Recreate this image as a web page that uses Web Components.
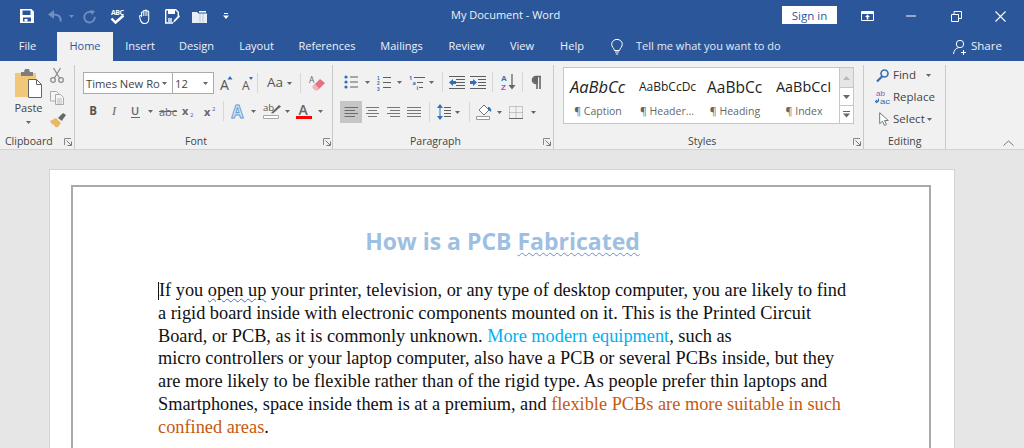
<!DOCTYPE html>
<html><head><meta charset="utf-8"><title>My Document - Word</title>
<style>
html,body{margin:0;padding:0;width:1024px;height:448px;overflow:hidden;background:#e6e6e6;font-family:"Open Sans","Noto Sans",sans-serif}
</style></head><body>
<w-app>
  <w-titlebar>
    <w-ico slot="qat" n="save" w="14" h="14" g="20" c="#fff"></w-ico>
    <w-ico slot="qat" n="undo" w="14" h="12" g="14"></w-ico>
    <w-ico slot="qat" n="caret" w="5" h="3" g="7" c="#6f8fbd"></w-ico>
    <w-ico slot="qat" n="redo" w="13" h="13" g="9"></w-ico>
    <w-ico slot="qat" n="spell" w="15" h="16" g="14"></w-ico>
    <w-ico slot="qat" n="hand" w="12" h="16" g="14"></w-ico>
    <w-ico slot="qat" n="saveedit" w="15" h="15" g="14"></w-ico>
    <w-ico slot="qat" n="folder" w="15" h="13" g="12"></w-ico>
    <w-ico slot="qat" n="custom" w="6" h="6" g="16"></w-ico>
    <span slot="title">My Document - Word</span>
    <w-ico slot="win" n="display" w="13" h="10" g="0"></w-ico>
    <w-ico slot="win" n="min" w="10" h="2" g="32"></w-ico>
    <w-ico slot="win" n="restore" w="11" h="11" g="35"></w-ico>
    <w-ico slot="win" n="close" w="11" h="11" g="33"></w-ico>
  </w-titlebar>
  <w-tabs>
    <w-tab w="55">File</w-tab><w-tab w="56" g="2" active>Home</w-tab><w-tab w="54">Insert</w-tab><w-tab w="59">Design</w-tab><w-tab w="61">Layout</w-tab><w-tab w="80">References</w-tab><w-tab w="69">Mailings</w-tab><w-tab w="61">Review</w-tab><w-tab w="50">View</w-tab><w-tab w="50">Help</w-tab>
    <w-ico n="bulb" w="12" h="16" g="14"></w-ico>
    <w-tab w="157" g="13" left dim>Tell me what you want to do</w-tab>
    <w-ico n="person" w="14" h="16" g="160"></w-ico>
    <w-tab w="40" g="4" left big>Share</w-tab>
  </w-tabs>
  <w-ribbon>
    <w-group w="75" label="Clipboard" lx="5" launch="64">
      <w-cols>
        <w-paste></w-paste>
        <w-stack>
          <w-ico n="cut" w="14" h="15"></w-ico>
          <w-ico n="copy" w="14" h="14"></w-ico>
          <w-ico n="painter" w="16" h="15"></w-ico>
        </w-stack>
      </w-cols>
    </w-group>
    <w-group w="258" label="Font" lx="110" launch="248" sep>
      <w-row t="7">
        <w-field w="90" g="8" caret="1" val="Times New Ro"></w-field>
        <w-field w="42" g="-1" caret="1" val="12"></w-field>
        <w-ico n="grow" w="12" h="14" g="6"></w-ico>
        <w-ico n="shrink" w="11" h="13" g="10"></w-ico>
        <w-vr g="4"></w-vr>
        <w-txt g="9" s="13.5" c="#555">Aa</w-txt>
        <w-ico n="caret" w="5" h="3" g="4"></w-ico>
        <w-vr g="8"></w-vr>
        <w-ico n="eraser" w="16" h="16" g="8"></w-ico>
      </w-row>
      <w-row t="6">
        <w-txt g="14" s="11.5" c="#555" b w="8">B</w-txt>
        <w-txt g="13" s="12.5" c="#666" i serif w="8">I</w-txt>
        <w-ico n="under" w="9" h="13" g="13"></w-ico>
        <w-ico n="caret" w="5" h="3" g="8"></w-ico>
        <w-txt g="6" s="11" c="#666" strike w="17">abc</w-txt>
        <w-ico n="sub" w="12" h="11" g="6"></w-ico>
        <w-ico n="sup" w="12" h="11" g="10"></w-ico>
        <w-vr g="7"></w-vr>
        <w-ico n="effect" w="14" h="15" g="8"></w-ico>
        <w-ico n="caret" w="5" h="3" g="5"></w-ico>
        <w-ico n="high" w="18" h="16" g="7"></w-ico>
        <w-ico n="caret" w="5" h="3" g="4"></w-ico>
        <w-ico n="color" w="16" h="15" g="6"></w-ico>
        <w-ico n="caret" w="5" h="3" g="6"></w-ico>
      </w-row>
    </w-group>
    <w-group w="221" label="Paragraph" lx="77" launch="210" sep>
      <w-row t="6">
        <w-ico n="bullets" w="14" h="14" g="11"></w-ico>
        <w-ico n="caret" w="5" h="3" g="7"></w-ico>
        <w-ico n="numbers" w="14" h="15" g="7"></w-ico>
        <w-ico n="caret" w="5" h="3" g="6"></w-ico>
        <w-ico n="multi" w="16" h="15" g="7"></w-ico>
        <w-ico n="caret" w="5" h="3" g="4"></w-ico>
        <w-vr g="8"></w-vr>
        <w-ico n="outdent" w="16" h="13" g="6"></w-ico>
        <w-ico n="indent" w="16" h="13" g="5"></w-ico>
        <w-vr g="6"></w-vr>
        <w-ico n="sort" w="15" h="16" g="8"></w-ico>
        <w-vr g="6"></w-vr>
        <w-ico n="pilcrow" w="10" h="13" g="9"></w-ico>
      </w-row>
      <w-row t="8">
        <w-ico n="left" w="22" h="22" g="7" on></w-ico>
        <w-ico n="center" w="13" h="11" g="4"></w-ico>
        <w-ico n="right" w="13" h="11" g="8"></w-ico>
        <w-ico n="just" w="14" h="11" g="7"></w-ico>
        <w-vr g="8"></w-vr>
        <w-ico n="spacing" w="14" h="16" g="7"></w-ico>
        <w-ico n="caret" w="5" h="3" g="4"></w-ico>
        <w-vr g="9"></w-vr>
        <w-ico n="shade" w="16" h="16" g="6"></w-ico>
        <w-ico n="caret" w="5" h="3" g="5"></w-ico>
        <w-ico n="borders" w="14" h="13" g="7"></w-ico>
        <w-ico n="caret" w="5" h="3" g="8"></w-ico>
      </w-row>
    </w-group>
    <w-group w="310" label="Styles" lx="134" launch="299" sep>
      <w-gallery>
        <w-style prev="AaBbCc" name="¶ Caption" w="56" g="6" s="16.5" it></w-style>
        <w-style prev="AaBbCcDc" name="¶ Header..." w="56" g="13" s="12"></w-style>
        <w-style prev="AaBbCc" name="¶ Heading" w="56" g="12" s="15.5"></w-style>
        <w-style prev="AaBbCcI" name="¶ Index" w="56" g="13" s="14.4"></w-style>
      </w-gallery>
    </w-group>
    <w-group w="82" label="Editing" lx="24" sep>
      <w-editrow first><w-ico n="find" w="13" h="13" g="12"></w-ico><w-txt g="4" s="11.5" c="#444">Find</w-txt><w-ico n="caret" w="5" h="3" g="10"></w-ico></w-editrow>
      <w-editrow><w-ico n="replace" w="16" h="14" g="11"></w-ico><w-txt g="2" s="11.5" c="#444">Replace</w-txt></w-editrow>
      <w-editrow><w-ico n="select" w="10" h="14" g="15"></w-ico><w-txt g="4" s="11.5" c="#444">Select</w-txt><w-ico n="caret" w="5" h="3" g="2"></w-ico></w-editrow>
    </w-group>
    <w-ico n="chev" w="11" h="6" g="57" style="align-self:flex-end;margin-bottom:3px"></w-ico>
  </w-ribbon>
  <w-canvas>
    <w-page>
      <w-heading>How is a PCB <u>Fabricated</u></w-heading>
      <w-body>
        <w-cursor></w-cursor>If you <w-sq>open up</w-sq> your printer, television, or any type of desktop computer, you are likely to find<br>
        a rigid board inside with electronic components mounted on it. This is the Printed Circuit<br>
        Board, or PCB, as it is commonly unknown. <span style="color:#00b0f0">More modern equipment</span>, such as<br>
        micro controllers or your laptop computer, also have a PCB or several PCBs inside, but they<br>
        are more likely to be flexible rather than of the rigid type. As people prefer thin laptops and<br>
        Smartphones, space inside them is at a premium, and <span style="color:#c55a11">flexible PCBs are more suitable in such</span><br>
        <span style="color:#c55a11">confined areas</span>.
      </w-body>
    </w-page>
  </w-canvas>
</w-app>
<script>
const ui='"Open Sans","Noto Sans",sans-serif';
const L='#5e5e5e',B='#2f6fb5',LB='#5b9bd5',T='#666';
const bars=(ys,x1,x2,c=L,w=1)=>ys.map((y,i)=>{const a=Array.isArray(x1)?x1[i]:x1,b=Array.isArray(x2)?x2[i]:x2;return `<path d="M${a} ${y}H${b}" stroke="${c}" stroke-width="${w}"/>`}).join('');
const ICONS={
 caret:c=>`<path d="M0 0h5L2.5 3z" fill="${c||'#666'}"/>`,
 save:()=>`<path fill="#fff" fill-rule="evenodd" d="M0 0h11.5L14 2.5V14H0zM2.5 1.5V6h8V1.500zM3 8.500V12.500h8V8.500z"/><rect x="4.500" y="10" width="3" height="2.500" fill="#fff"/>`,
 undo:()=>`<path d="M12.500 11.500C13.500 6.500 10 4 4 4.500" fill="none" stroke="#6f8fbd" stroke-width="2"/><path d="M6 0 0 4.500 6 9z" fill="#6f8fbd"/>`,
 redo:()=>`<path d="M8.500 2.300A5.300 5.300 0 1 0 11.800 6.800" fill="none" stroke="#6f8fbd" stroke-width="1.800"/><path d="M7 0l5 1-3 4z" fill="#6f8fbd"/>`,
 spell:()=>`<text x="1" y="6.500" font-family="Open Sans" font-weight="700" font-size="7" fill="#fff" textLength="13">ABC</text><path d="M1.500 10.500l4 4 8-7" fill="none" stroke="#fff" stroke-width="2.400"/>`,
 hand:()=>`<path d="M2.500 8V4.500a1 1 0 0 1 1.800 0V3a1 1 0 0 1 1.800 0v-.300a1 1 0 0 1 1.800 0V3.500a1 1 0 0 1 1.800 0V11c0 3-1.500 4.500-4 4.500-2.500 0-3.500-1-4.300-3.500L.6 8.500C.5 7.500 1.500 7 2.500 8z" fill="none" stroke="#fff" stroke-width="1.100"/><path d="M4.300 4.500V8M6.100 3v5M7.900 3v5" stroke="#fff" stroke-width=".9"/>`,
 saveedit:()=>`<path d="M.7.700h10l2.600 2.500V8M8 14H.7V.7" fill="none" stroke="#fff" stroke-width="1.400"/><rect x="3" y="1" width="7" height="4" fill="#fff"/><rect x="3" y="9" width="4" height="4" fill="#fff" opacity=".7"/><path d="M8 14l1-3 5-5 1 1.500-5 5z" fill="#fff"/>`,
 folder:()=>`<path d="M0 2h5l1.500 1.500H15V13H0z" fill="#e9eef6"/><path d="M7 1h7v1.500H7z" fill="#fff"/><path d="M8 3.500v9M11 3.500v9" stroke="#2b579a" stroke-width=".5" opacity=".5"/>`,
 custom:()=>`<path d="M1 .5h4" stroke="#fff" stroke-width="1"/><path d="M0 2.500h6L3 6z" fill="#fff"/>`,
 display:()=>`<path d="M.5.500h12v9H.5z" fill="none" stroke="#fff"/><path d="M1 1h11v2H1z" fill="#fff"/><path d="M6.500 3.500l-2.500 2.500h1.700v2.500h1.600V6H9z" fill="#fff"/>`,
 min:()=>`<path d="M0 1h10" stroke="#fff" stroke-width="1"/>`,
 restore:()=>`<path d="M.5 3.500h7v7h-7zM3 3.500V.5h7.500v7H7.500" fill="none" stroke="#fff"/>`,
 close:()=>`<path d="M.5.500l10 10M10.500.500l-10 10" stroke="#fff" stroke-width="1.100"/>`,
 bulb:()=>`<path d="M3.500 11.500C3 9 .7 8 .7 5.200a5.300 4.800 0 0 1 10.600 0c0 2.800-2.300 3.800-2.800 6.300z" fill="none" stroke="#fff"/><path d="M4 13h4M4.800 15h2.400" stroke="#fff"/>`,
 person:()=>`<circle cx="7" cy="5" r="3.700" fill="none" stroke="#fff"/><path d="M.5 15c.3-3.500 2.500-6 5-6.300" fill="none" stroke="#fff"/><path d="M10.500 11v5M8 13.500h5" stroke="#fff"/>`,
 cut:()=>`<path d="M3.500 0l6 10M10.500 0l-6 10" stroke="#8c8c8c" stroke-width="1.300"/><circle cx="3" cy="12" r="2.300" fill="none" stroke="#8c8c8c" stroke-width="1.300"/><circle cx="11" cy="12" r="2.300" fill="none" stroke="#8c8c8c" stroke-width="1.300"/>`,
 copy:()=>`<path d="M.5.500h6l2 2V10H.5z" fill="#f4f4f4" stroke="#aaa"/><path d="M5.500 3.500h5l3 3v7h-8z" fill="#f4f4f4" stroke="#aaa"/><path d="M7 8h5M7 10h5M7 12h5" stroke="#bbb"/>`,
 painter:()=>`<path d="M0 8l6-3 5 5-3 4c-1 .5-2 .5-3-.5L3 11l-1 .5z" fill="#eab860"/><path d="M9 4l4-4 3 2-3 4 -1 2-4-3z" fill="#666"/>`,
 grow:()=>`<text x="0" y="14" font-family="Open Sans" font-size="14" fill="#555">A</text><path d="M7.500 3.500L10 0l2.500 3.500z" fill="${B}"/>`,
 shrink:()=>`<text x="0" y="13" font-family="Open Sans" font-size="12" fill="#555">A</text><path d="M7 0h4L9 3z" fill="${B}"/>`,
 eraser:()=>`<text x="0" y="7.500" font-family="Open Sans" font-size="8.500" fill="#666">A</text><path d="M4 11l7-7 5 4-7 7z" fill="#e5707f"/><path d="M3 12l3-3 4 4-2 2.500H6z" fill="#f2b3bb"/>`,
 under:()=>`<text x="0" y="9.500" font-family="Open Sans" font-size="11" font-weight="600" fill="#666">U</text><path d="M0 12.500h9" stroke="#666"/>`,
 sub:()=>`<text x="0" y="9" font-family="Open Sans" font-weight="700" font-size="11" fill="#666">x</text><text x="8" y="11" font-family="Open Sans" font-size="6" fill="${B}">2</text>`,
 sup:()=>`<text x="0" y="10" font-family="Open Sans" font-weight="700" font-size="11" fill="#666">x</text><text x="8" y="5" font-family="Open Sans" font-size="6" fill="${B}">2</text>`,
 effect:()=>`<text x="-.5" y="14" font-family="Open Sans" font-weight="700" font-size="17" fill="#dbe8f6" stroke="${LB}" stroke-width=".9">A</text>`,
 high:()=>`<text x="0" y="8" font-family="Open Sans" font-size="9.500" fill="#555">ab</text><path d="M8 10l8-8 2 1.500-8 7z" fill="#666"/><path d="M.5 12.500h15v3H.5z" fill="#fff" stroke="#a6a6a6"/>`,
 color:()=>`<text x="2.500" y="11" font-family="Open Sans" font-weight="600" font-size="14" fill="#666">A</text><rect x="0" y="12" width="16" height="3" fill="#f00"/>`,
 bullets:()=>`<circle cx="2" cy="2" r="1.600" fill="${B}"/><circle cx="2" cy="7" r="1.600" fill="${B}"/><circle cx="2" cy="12" r="1.600" fill="${B}"/>`+bars([2,7,12],6,14),
 numbers:()=>`<text x="0" y="4.500" font-family="Liberation Sans" font-weight="700" font-size="4.700" fill="${B}">1</text><text x="0" y="10" font-family="Liberation Sans" font-weight="700" font-size="4.700" fill="${B}">2</text><text x="0" y="15.500" font-family="Liberation Sans" font-weight="700" font-size="4.700" fill="${B}">3</text>`+bars([2.500,7.500,12.500],6,14),
 multi:()=>`<text x="0" y="5" font-family="Open Sans" font-weight="700" font-size="5.500" fill="${B}">1</text><text x="3.500" y="10" font-family="Open Sans" font-weight="700" font-size="5.500" fill="${B}">a</text><text x="7.500" y="15" font-family="Open Sans" font-weight="700" font-size="5.500" fill="${B}">i</text>`+bars([2.500,7.500,12.500],[5,8,10],[16,14,14]),
 outdent:()=>bars([.5,12.500],0,16)+bars([3.500,6.500,9.500],7,16)+`<path d="M0 6.500l4-3.500v2h3v3H4v2z" fill="${B}"/>`,
 indent:()=>bars([.5,12.500],0,16)+bars([3.500,6.500,9.500],8,16)+`<path d="M7 6.500l-4-3.500v2H0v3h3v2z" fill="${B}"/>`,
 sort:()=>`<text x="0" y="7" font-family="Liberation Sans" font-weight="700" font-size="8" fill="${B}">A</text><text x="0" y="16" font-family="Liberation Sans" font-weight="700" font-size="8" fill="#8e5bb5">Z</text><path d="M11 0v13" stroke="#666" stroke-width="1.300"/><path d="M7.500 11h7L11 15.500z" fill="#666"/>`,
 pilcrow:()=>`<path d="M9 .5H4a3.500 3.500 0 0 0 0 7h1V13M8 .5V13" fill="none" stroke="#666" stroke-width="1.600"/><path d="M4 1h2v6H4a3 3 0 0 1 0-6z" fill="#666"/>`,
 left:()=>`<rect width="22" height="22" fill="#c6c6c6"/>`+bars([6.500,9.500,12.500,15.500],4.500,[18,15,18,15],'#6b6b6b'),
 center:()=>bars([.5,3.500,6.500,9.500],[0,2,0,2],[13,11,13,11],'#777'),
 right:()=>bars([.5,3.500,6.500,9.500],[0,3,0,3],13,'#777'),
 just:()=>bars([.5,3.500,6.500,9.500],0,14,'#777'),
 spacing:()=>`<path d="M3 2v12" stroke="${B}"/><path d="M0 4l3-4 3 4zM0 12l3 4 3-4z" fill="${B}"/>`+bars([3.500,6.500,9.500,12.500],7,14),
 shade:()=>`<path d="M3 6l5-5 5 5-5 5z" fill="#fff" stroke="#777"/><path d="M12 3c2 0 4 2 3 5-1-1-2-2-3-2z" fill="${B}"/><path d="M.5 12.500h13v3H.5z" fill="#fff" stroke="#999"/>`,
 borders:()=>`<path d="M.5.500h13v12H.5zM.5 6.500h13M7 .5v12" fill="none" stroke="#999" stroke-dasharray="1 1"/><path d="M0 12.500h14" stroke="#666"/>`,
 find:()=>`<circle cx="8.500" cy="4.500" r="3.500" fill="none" stroke="${B}" stroke-width="1.600"/><path d="M6 7.500L1 12.500" stroke="${B}" stroke-width="2.200"/>`,
 replace:()=>`<text x="1" y="6" font-family="Liberation Sans" font-size="7" fill="#8e5bb5" textLength="9" lengthAdjust="spacingAndGlyphs">ab</text><text x="5" y="14" font-family="Liberation Sans" font-size="7" fill="${B}" textLength="10" lengthAdjust="spacingAndGlyphs">ac</text><path d="M3.500 8.500v3H1.500M0 11.500l2-1.500v3z" fill="none" stroke="${B}"/>`,
 select:()=>`<path d="M.7.700v11l2.800-2.500 2 4.300 2-1-2-4h3.800z" fill="#fff" stroke="#777"/>`,
 chev:()=>`<path d="M.5 5.500l5-4.500 5 4.500" fill="none" stroke="#777"/>`,
 launch:()=>`<path d="M.5 7V.5H7" fill="none" stroke="#888"/><path d="M2.500 2.500L7 7M3.500 7.500H7.500V3.500" fill="none" stroke="#777"/>`,
 up:()=>`<path d="M0 4h7L3.500 0z" fill="#b8b8b8"/>`,
 down:()=>`<path d="M0 0h7L3.500 4z" fill="#666"/>`,
 more:()=>`<path d="M0 .5h7" stroke="#666"/><path d="M0 2.500h7L3.500 6.500z" fill="#666"/>`
};
function def(name,css,html){
  customElements.define(name,class extends HTMLElement{
    constructor(){super();this.attachShadow({mode:'open'})}
    connectedCallback(){
      const a=n=>this.getAttribute(n);
      this.shadowRoot.innerHTML=`<style>${typeof css==='function'?css(a,this):css}</style>${typeof html==='function'?html(a,this):html}`;
    }
  });
}
const svg=(n,w,h,c)=>`<svg width="${w}" height="${h}" viewBox="0 0 ${w} ${h}" style="display:block;overflow:visible">${ICONS[n](c)}</svg>`;
def('w-ico',a=>`:host{display:block;flex:none;margin-left:${a('g')||0}px;width:${a('w')}px;height:${a('h')}px}`,a=>svg(a('n'),+a('w'),+a('h'),a('c')));
def('w-app',`:host{display:flex;flex-direction:column;width:1024px;height:448px;overflow:hidden}`,`<slot></slot>`);
def('w-titlebar',`:host{display:flex;flex:none;height:32px;background:#2b579a;align-items:center;position:relative;color:#fff;font:11px ${ui}}
 .qat,.win{display:flex;align-items:center}.win{margin-left:auto;padding-right:18px}
 .title{position:absolute;left:451px;top:7px;color:#eef2f8;white-space:nowrap;font-size:11px}
 .sign{position:absolute;left:782px;top:6px;width:55px;height:18px;background:#fff;color:#2b579a;display:flex;align-items:center;justify-content:center;font-size:11.5px}`,
 `<div class="qat"><slot name="qat"></slot></div><div class="title"><slot name="title"></slot></div><div class="sign">Sign in</div><div class="win"><slot name="win"></slot></div>`);
def('w-tabs',`:host{display:flex;flex:none;height:29px;background:#2b579a;align-items:center}`,`<slot></slot>`);
def('w-tab',a=>`:host{display:flex;flex:none;width:${a('w')}px;margin-left:${a('g')||0}px;height:29px;align-items:center;justify-content:${a('left')!==null?'flex-start':'center'};font:${a('big')!==null?'11.5':'11'}px ${ui};white-space:nowrap;padding-bottom:2px;box-sizing:border-box;
 color:${a('active')!==null?'#2b579a':(a('dim')!==null?'#e3e9f3':'#eef2f8')};background:${a('active')!==null?'#f1f1f1':'transparent'}}`,`<slot></slot>`);
def('w-ribbon',`:host{display:flex;flex:none;height:88px;background:#f1f1f1;border-bottom:1px solid #d2d2d2}`,`<slot></slot>`);
def('w-group',a=>`:host{display:block;flex:none;width:${a('w')}px;height:84px;margin-top:4px;position:relative;box-sizing:border-box;border-right:1px solid #c8c8c8;color:#444}
 .label{position:absolute;left:${a('lx')}px;bottom:0;font:10.5px/15px ${ui};color:#444;white-space:nowrap}
 .l{position:absolute;left:${a('launch')}px;bottom:3px}`,
 a=>`<slot></slot><div class="label">${a('label')}</div>${a('launch')?`<div class="l">${svg('launch',8,8)}</div>`:''}`);
def('w-cols',`:host{display:flex}`,`<slot></slot>`);
def('w-stack',`:host{display:flex;flex-direction:column;gap:8px;margin-left:8px;padding-top:3px}`,`<slot></slot>`);
def('w-paste',`:host{display:flex;flex-direction:column;align-items:center;width:27px;margin-left:15px;padding-top:4px;font:11px/14px ${ui};color:#444}
 .t{margin-top:3px}.c{margin-top:6px}`,()=>`<svg width="27" height="29" viewBox="0 0 27 29" style="display:block"><path d="M0 4h21v24H0z" fill="#f1c877"/><path d="M6 3h3l1-3h4l1 3h3v4H6z" fill="#7d7d7d"/><path d="M13.500 10.500h8l5 5v13h-13z" fill="#fff" stroke="#666"/><path d="M21.500 10.500v5h5" fill="none" stroke="#666"/></svg>
 <div class="t">Paste</div><div class="c">${svg('caret',5,3)}</div>`);
def('w-row',a=>`:host{display:flex;align-items:center;height:22px;margin-top:${a('t')||0}px}`,`<slot></slot>`);
def('w-vr',a=>`:host{display:block;flex:none;width:1px;height:20px;background:#d6d6d6;margin-left:${a('g')||0}px}`,``);
def('w-field',a=>`:host{display:flex;flex:none;box-sizing:border-box;width:${a('w')}px;margin-left:${a('g')||0}px;height:22px;background:#fff;border:1px solid #ababab;align-items:center;padding:0 5px 0 2px;font:11.2px ${ui};color:#444;justify-content:space-between;white-space:nowrap}`,
 a=>`<span>${a('val')}</span>${svg('caret',5,3)}`);
def('w-txt',a=>`:host{display:block;flex:none;margin-left:${a('g')||0}px;${a('w')?`width:${a('w')}px;text-align:center;`:''}font:${a('i')!==null?'italic ':''}${a('b')!==null?'700 ':''}${a('s')}px/1 ${a('serif')!==null?'"Liberation Serif",serif':ui};color:${a('c')};white-space:nowrap;${a('strike')!==null?'text-decoration:line-through;':''}}`,`<slot></slot>`);
def('w-gallery',`:host{display:flex;margin:2px 0 0 9px;width:291px;height:57px;box-sizing:border-box;background:#fff;border:1px solid #c6c6c6}
 .items{display:flex;flex:1;min-width:0}
 .s{width:13px;flex:none;display:flex;flex-direction:column;border-left:1px solid #c6c6c6}
 .s div{display:flex;align-items:center;justify-content:center;box-sizing:border-box}
 .u{height:20px;background:#e6e6e6;border-bottom:1px solid #c6c6c6}.m{height:18px;border-bottom:1px solid #c6c6c6}.b{flex:1}`,
 ()=>`<div class="items"><slot></slot></div><div class="s"><div class="u">${svg('up',7,4)}</div><div class="m">${svg('down',7,4)}</div><div class="b">${svg('more',7,7)}</div></div>`);
def('w-style',a=>`:host{display:block;flex:none;width:${a('w')}px;margin-left:${a('g')}px;padding-top:7px;font-family:${ui}}
 .p{height:24px;line-height:24px;white-space:nowrap;font-size:${a('s')}px;color:#222;${a('it')!==null?'font-style:italic;':''}text-align:left}
 .n{font-size:10.5px;color:#666;text-align:center;white-space:nowrap;margin-top:5px}`,
 a=>`<div class="p">${a('prev')}</div><div class="n">${a('name')}</div>`);
def('w-editrow',a=>`:host{display:flex;align-items:center;height:22px;${a('first')!==null?'margin-top:-1px;':''}}`,`<slot></slot>`);
def('w-canvas',`:host{display:block;flex:1;min-height:0;padding:19px 0 0 49px;background:#e6e6e6;overflow:hidden}`,`<slot></slot>`);
def('w-page',`:host{display:block;width:906px;height:400px;box-sizing:border-box;background:#fff;border:1px solid #d4d4d4;padding:15px 24px 0 21px}
 .f{border:2px solid #a9a9a9;height:400px;box-sizing:border-box;width:860px;padding:38px 0 0 85px}`,`<div class="f"><slot></slot></div>`);
def('w-heading',`:host{display:block;font:700 23px/32px ${ui};color:#9dc0e2;margin-left:-85px;width:860px;box-sizing:border-box;text-align:center;padding-right:1px;height:54px}
 ::slotted(u){text-decoration:underline wavy #6d8fc9 1px;text-underline-offset:2px}`,`<slot></slot>`);
def('w-body',`:host{display:block;font:18.32px/22.75px "Liberation Serif",serif;color:#111;white-space:nowrap}`,`<slot></slot>`);
def('w-sq',`:host{display:inline;text-decoration:underline wavy #4c6fc0 1px;text-underline-offset:2px}`,`<slot></slot>`);
def('w-cursor',`:host{display:inline-block;width:1px;height:18px;background:#111;vertical-align:-4px}`,``);
</script>
</body></html>
